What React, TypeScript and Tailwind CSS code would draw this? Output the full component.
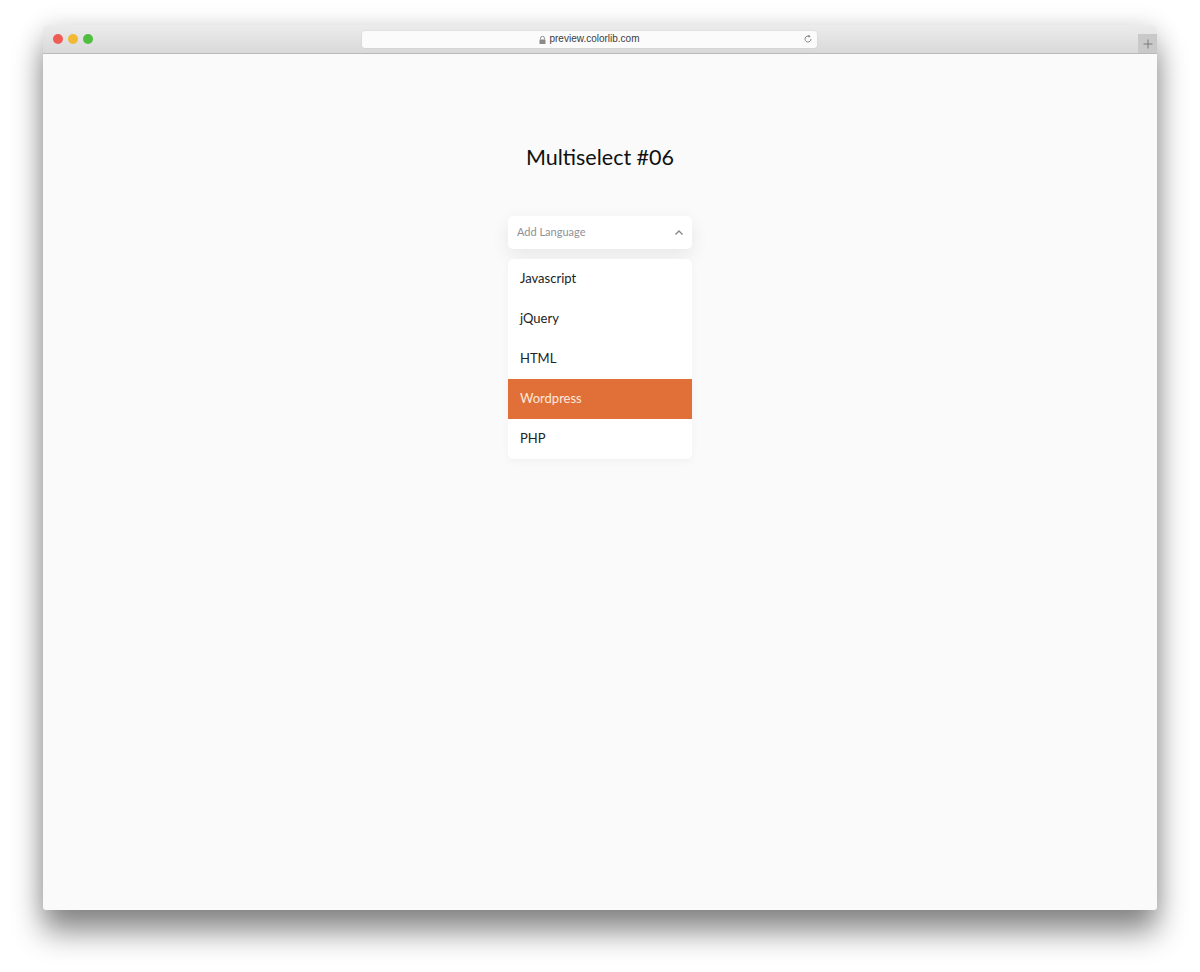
import React from "react";

const items = ["Javascript", "jQuery", "HTML", "Wordpress", "PHP"];

export default function App() {
  return (
    <div className="w-[1200px] h-[972px] bg-white overflow-hidden pt-[25px] pl-[43px]" style={{ fontFamily: "Lato, 'Noto Sans', sans-serif" }}>
      <div className="w-[1114px] h-[885px] flex flex-col rounded-t-[5px] rounded-b-[3px] bg-[#fafafa] shadow-[0_22px_30px_rgba(0,0,0,0.45),0_0_24px_rgba(0,0,0,0.12)]">
        {/* title bar */}
        <div className="h-[29px] flex items-center rounded-t-[5px] bg-gradient-to-b from-[#ececec] to-[#d9d9d9] border-b border-[#b9b9b9] relative">
          <div className="flex items-center gap-[5px] pl-[10px]">
            <span className="w-[10px] h-[10px] rounded-full bg-[#ee5c55]" />
            <span className="w-[10px] h-[10px] rounded-full bg-[#f2b935]" />
            <span className="w-[10px] h-[10px] rounded-full bg-[#4fbe3f]" />
          </div>
          <div className="ml-[269px] w-[455px] h-[17px] rounded-[3px] bg-[#fbfbfb] flex items-center justify-center relative shadow-[0_0_0_0.5px_rgba(0,0,0,0.06)]">
            <svg width="7" height="8" viewBox="0 0 7 8" className="mr-[3px] mt-[1px]">
              <path d="M1.5 3.5 V2.3 a2 2 0 0 1 4 0 V3.5" fill="none" stroke="#8a8a8a" strokeWidth="1" />
              <rect x="0.5" y="3.5" width="6" height="4.5" rx="0.6" fill="#8a8a8a" />
            </svg>
            <span className="text-[10px] text-[#3c3c3c] leading-none" style={{ fontFamily: "'Liberation Sans', Arial, sans-serif" }}>preview.colorlib.com</span>
            <svg width="10" height="10" viewBox="0 0 10 10" className="absolute right-[4px] top-[3px]">
              <path d="M8 5 A3 3 0 1 1 6.4 2.35" fill="none" stroke="#777" strokeWidth="0.9" />
              <path d="M5.6 0.8 L7.6 2.4 L5.4 3.6 Z" fill="#777" />
            </svg>
          </div>
          <div className="absolute right-0 bottom-0 w-[19px] h-[19px] bg-[#c9c9c9] flex items-center justify-center">
            <svg width="10" height="10" viewBox="0 0 10 10">
              <path d="M5 0.5 V9.5 M0.5 5 H9.5" stroke="#7b7b7b" strokeWidth="1" />
            </svg>
          </div>
        </div>
        {/* content */}
        <div className="flex-1 flex flex-col items-center">
          <h1 className="mt-[88px] text-[21.5px] leading-[30px] text-[#111] font-normal">Multiselect #06</h1>
          <div className="mt-[44px] w-[184px] h-[33px] bg-white rounded-[5px] flex items-center justify-between pl-[9px] pr-[8px] shadow-[0_6px_18px_rgba(0,0,0,0.08)]">
            <span className="text-[11px] text-[#8f8f99]">Add Language</span>
            <svg width="10" height="7" viewBox="0 0 10 7">
              <path d="M1.5 5.5 L5 2 L8.5 5.5" fill="none" stroke="#888" strokeWidth="1.4" />
            </svg>
          </div>
          <div className="mt-[10px] w-[184px] bg-white rounded-[5px] overflow-hidden shadow-[0_2px_8px_rgba(0,0,0,0.04)]">
            {items.map((it) => (
              <div
                key={it}
                className={
                  it === "Wordpress"
                    ? "h-[40px] flex items-center pl-[12px] text-[13px] bg-[#e07038] text-[#fde9dc]"
                    : "h-[40px] flex items-center pl-[12px] text-[13px] text-[#222]"
                }
              >
                {it}
              </div>
            ))}
          </div>
        </div>
      </div>
    </div>
  );
}
